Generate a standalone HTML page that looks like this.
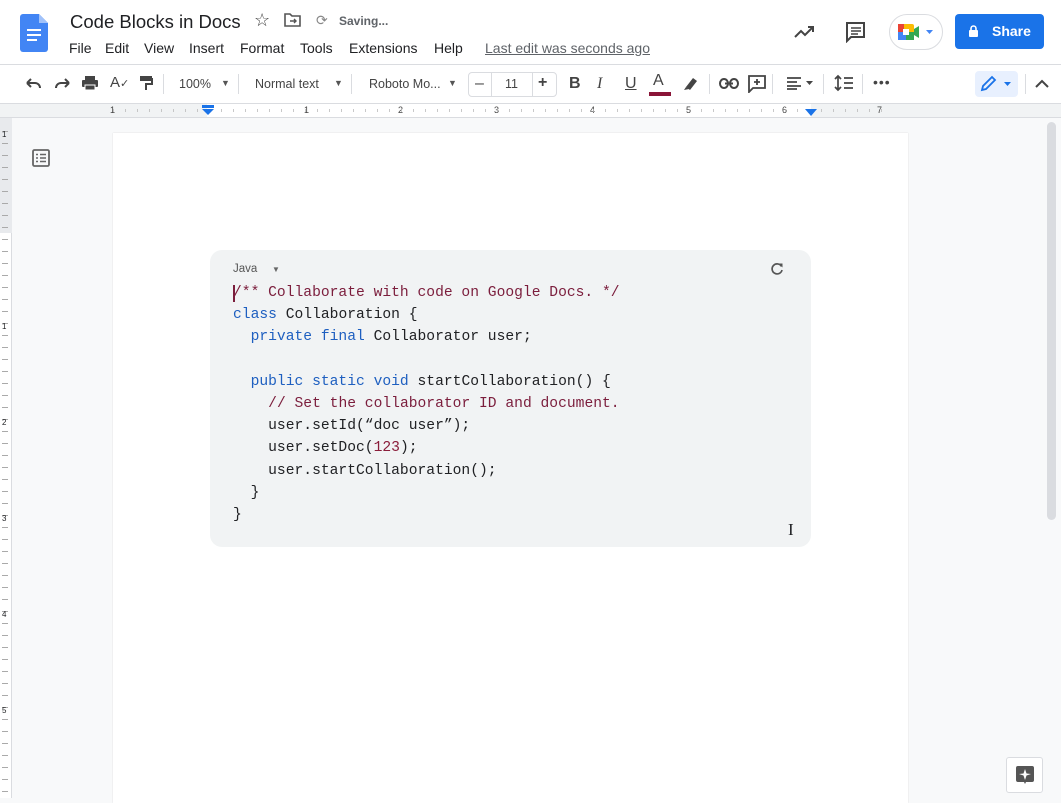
<!DOCTYPE html><html><head><style>
*{margin:0;padding:0;box-sizing:border-box}
body{width:1061px;height:798px;overflow:hidden;background:#f8f9fa;font-family:"Liberation Sans",sans-serif;position:relative;color:#202124}
.a{position:absolute}
.menu span{position:absolute;top:0}
.tb{font-size:12.5px;color:#444}
.sep{position:absolute;top:74px;width:1px;height:20px;background:#dadce0}
pre{font-family:"Liberation Mono",monospace;font-size:14.65px;line-height:22.2px;color:#202124}
.k{color:#1e5fc0}.c{color:#7b1d3c}.n{color:#8a1d3a}
</style></head><body>
<div class="a" style="left:0;top:0;width:1061px;height:65px;background:#fff;border-bottom:1px solid #dadce0"></div>
<svg class="a" style="left:20px;top:14px" width="28" height="38"><path d="M0 3a3 3 0 0 1 3-3h16l9 9v26a3 3 0 0 1-3 3H3a3 3 0 0 1-3-3z" fill="#4285f4"/><path d="M19 0v9h9z" fill="#a1c2fa"/><rect x="7" y="15" width="14" height="2" fill="#fff"/><rect x="7" y="20" width="14" height="2" fill="#fff"/><rect x="7" y="25" width="10" height="2" fill="#fff"/></svg>
<div class="a" style="left:70px;top:11px;font-size:18.5px">Code Blocks in Docs</div>
<div class="a" style="left:254px;top:10px;font-size:18px;color:#444">☆</div>
<svg class="a" style="left:284px;top:13px" width="17" height="14"><path d="M1 1h5l2 2h8v10H1z" fill="none" stroke="#555" stroke-width="1.6"/><path d="M6 8h6M10 6l2 2-2 2" stroke="#555" stroke-width="1.4" fill="none"/></svg>
<div class="a" style="left:316px;top:12px;font-size:14px;color:#888">⟳</div>
<div class="a" style="left:339px;top:14px;font-size:12px;color:#5f6368;font-weight:bold">Saving...</div>
<div class="a menu" style="left:0;top:40px;font-size:14px"><span style="left:69px">File</span><span style="left:105px">Edit</span><span style="left:144px">View</span><span style="left:189px">Insert</span><span style="left:240px">Format</span><span style="left:300px">Tools</span><span style="left:349px">Extensions</span><span style="left:434px">Help</span></div>
<div class="a" style="left:485px;top:40px;font-size:14px;color:#5f6368;text-decoration:underline">Last edit was seconds ago</div>
<svg class="a" style="left:794px;top:24px" width="22" height="16"><path d="M1 13l6-6 4 4 8-8M14 3h5v5" fill="none" stroke="#444" stroke-width="2"/></svg>
<svg class="a" style="left:845px;top:21px" width="22" height="22"><path d="M2 2h17v14H6l-4 4z" fill="none" stroke="#444" stroke-width="2"/><path d="M6 7h10M6 10h10M6 13h7" stroke="#444" stroke-width="1.6"/></svg>
<div class="a" style="left:889px;top:14px;width:54px;height:36px;border:1px solid #dadce0;border-radius:18px;background:#fff"></div>
<svg class="a" style="left:897px;top:23px" width="40" height="18"><rect x="1" y="1" width="16" height="16" rx="2" fill="#fbbc04"/><rect x="1" y="9" width="8" height="8" fill="#4285f4"/><rect x="9" y="9" width="8" height="8" fill="#34a853"/><rect x="1" y="1" width="6" height="8" fill="#ea4335"/><rect x="6" y="6" width="6" height="6" fill="#fff"/><path d="M17 6l5-3v12l-5-3z" fill="#34a853"/><path d="M29 7h7l-3.5 4z" fill="#4285f4"/></svg>
<div class="a" style="left:955px;top:14px;width:89px;height:35px;background:#1a73e8;border-radius:4px;color:#fff;font-size:14px;font-weight:bold;line-height:35px;padding-left:37px">Share</div>
<svg class="a" style="left:968px;top:25px" width="11" height="13"><rect x="1" y="5" width="9" height="7" rx="1" fill="#fff"/><path d="M3 5V3.5a2.5 2.5 0 0 1 5 0V5" stroke="#fff" stroke-width="1.6" fill="none"/></svg>
<!-- toolbar -->
<div class="a" style="left:0;top:65px;width:1061px;height:38px;background:#fff"></div>
<svg class="a" style="left:24px;top:77px" width="48" height="14"><path d="M3 6h8a5 5 0 0 1 5 5M3 6l4-4M3 6l4 4" stroke="#444" stroke-width="2" fill="none"/><path d="M45 6h-8a5 5 0 0 0-5 5M45 6l-4-4M45 6l-4 4" stroke="#444" stroke-width="2" fill="none"/></svg>
<svg class="a" style="left:81px;top:75px" width="18" height="16"><rect x="1" y="5" width="16" height="7" rx="1" fill="#444"/><rect x="4" y="1" width="10" height="4" fill="#444"/><rect x="4" y="10" width="10" height="5" fill="#444" stroke="#fff"/></svg>
<div class="a" style="left:110px;top:74px;font-size:15px;color:#444">A<span style="font-size:11px">✓</span></div>
<svg class="a" style="left:139px;top:75px" width="14" height="16"><rect x="1" y="1" width="12" height="5" fill="#444"/><path d="M12 4h1v5H7v6" stroke="#444" stroke-width="2" fill="none"/></svg>
<div class="sep" style="left:163px"></div>
<div class="a tb" style="left:179px;top:77px">100%</div><div class="a" style="left:221px;top:78px;font-size:9px;color:#555">▼</div>
<div class="sep" style="left:238px"></div>
<div class="a tb" style="left:255px;top:77px">Normal text</div><div class="a" style="left:334px;top:78px;font-size:9px;color:#555">▼</div>
<div class="sep" style="left:351px"></div>
<div class="a tb" style="left:369px;top:77px">Roboto Mo...</div><div class="a" style="left:448px;top:78px;font-size:9px;color:#555">▼</div>
<div class="a" style="left:468px;top:72px;width:89px;height:25px;border:1px solid #dadce0;border-radius:4px"></div>
<div class="a" style="left:491px;top:72px;width:42px;height:25px;border-left:1px solid #dadce0;border-right:1px solid #dadce0"></div>
<div class="a tb" style="left:475px;top:75px;font-size:16px">–</div>
<div class="a tb" style="left:505px;top:77px">11</div>
<div class="a tb" style="left:538px;top:74px;font-size:16px;font-weight:bold">+</div>
<div class="a" style="left:569px;top:75px;font-size:16px;font-weight:bold;color:#444">B</div>
<div class="a" style="left:597px;top:75px;font-size:16px;font-style:italic;color:#444;font-family:'Liberation Serif'">I</div>
<div class="a" style="left:625px;top:75px;font-size:16px;text-decoration:underline;color:#444">U</div>
<div class="a" style="left:653px;top:72px;font-size:16px;color:#444">A</div>
<div class="a" style="left:649px;top:92px;width:22px;height:4px;background:#8a1538"></div>
<svg class="a" style="left:683px;top:75px" width="16" height="16"><path d="M3 12l7-9 4 3-7 9z" fill="#444"/><path d="M1 15l2-3 3 2z" fill="#444"/></svg>
<div class="sep" style="left:709px"></div>
<svg class="a" style="left:719px;top:78px" width="20" height="12"><rect x="1" y="1" width="8" height="9" rx="4.5" fill="none" stroke="#444" stroke-width="2"/><rect x="11" y="1" width="8" height="9" rx="4.5" fill="none" stroke="#444" stroke-width="2"/><path d="M6 5.5h8" stroke="#444" stroke-width="2"/></svg>
<svg class="a" style="left:748px;top:75px" width="18" height="18"><path d="M1 1h16v12H5l-4 4z" fill="none" stroke="#444" stroke-width="1.8"/><path d="M9 4v6M6 7h6" stroke="#444" stroke-width="1.8"/></svg>
<div class="sep" style="left:772px"></div>
<svg class="a" style="left:786px;top:76px" width="30" height="14"><path d="M1 2h14M1 6h10M1 10h14M1 13h10" stroke="#444" stroke-width="1.7"/><path d="M20 5h7l-3.5 4z" fill="#444"/></svg>
<div class="sep" style="left:823px"></div>
<svg class="a" style="left:834px;top:74px" width="20" height="18"><path d="M4 2v14M1 5l3-3 3 3M1 13l3 3 3-3" stroke="#444" stroke-width="1.7" fill="none"/><path d="M10 4h9M10 9h9M10 14h9" stroke="#444" stroke-width="1.8"/></svg>
<div class="sep" style="left:862px"></div>
<div class="a" style="left:873px;top:74px;font-size:14px;color:#444;letter-spacing:1px">•••</div>
<div class="a" style="left:975px;top:71px;width:43px;height:26px;background:#e8f0fe;border-radius:4px"></div>
<svg class="a" style="left:980px;top:75px" width="34" height="18"><path d="M2 15l1-4 9-9 3 3-9 9z" fill="none" stroke="#1a73e8" stroke-width="1.8"/><path d="M24 7h7l-3.5 4z" fill="#1a73e8"/></svg>
<div class="sep" style="left:1025px"></div>
<svg class="a" style="left:1035px;top:79px" width="14" height="9"><path d="M1 8l6-6 6 6" stroke="#444" stroke-width="2" fill="none"/></svg>
<!-- ruler -->
<div class="a" style="left:0;top:103px;width:1061px;height:15px;background:#f1f3f4;border-top:1px solid #dadce0;border-bottom:1px solid #dadce0"></div>
<div class="a" style="left:207px;top:104px;width:604px;height:13px;background:#fff"></div>
<div class="a" style="left:0;top:103px;width:1061px;height:15px;font-size:9px;color:#444;line-height:15px">
<span class="a" style="left:110px">1</span><span class="a" style="left:304px">1</span><span class="a" style="left:398px">2</span><span class="a" style="left:494px">3</span><span class="a" style="left:590px">4</span><span class="a" style="left:686px">5</span><span class="a" style="left:782px">6</span><span class="a" style="left:877px">7</span></div>
<div class="a" style="left:113px;top:109px;width:780px;height:3px;background:repeating-linear-gradient(90deg,#bbb 0 1px,transparent 1px 12px);opacity:.8"></div>
<svg class="a" style="left:201px;top:105px" width="14" height="12"><rect x="1" y="0" width="12" height="3" fill="#1a73e8"/><path d="M1 4h12l-6 6z" fill="#1a73e8"/></svg>
<svg class="a" style="left:805px;top:109px" width="12" height="8"><path d="M0 0h12l-6 7z" fill="#1a73e8"/></svg>
<!-- left ruler -->
<div class="a" style="left:0;top:118px;width:12px;height:680px;background:#fff;border-right:1px solid #dadce0"></div>
<div class="a" style="left:0;top:118px;width:12px;height:115px;background:#e8eaed"></div>
<div class="a" style="left:2px;top:120px;width:6px;height:678px;background:repeating-linear-gradient(180deg,transparent 0 11px,#aaa 11px 12px)"></div>
<div class="a" style="left:2px;top:130px;font-size:8px">1</div>
<div class="a" style="left:2px;top:322px;font-size:8px">1</div>
<div class="a" style="left:2px;top:418px;font-size:8px">2</div>
<div class="a" style="left:2px;top:514px;font-size:8px">3</div>
<div class="a" style="left:2px;top:610px;font-size:8px">4</div>
<div class="a" style="left:2px;top:706px;font-size:8px">5</div>
<svg class="a" style="left:32px;top:149px" width="18" height="18"><rect x="1" y="1" width="16" height="16" rx="1.5" fill="none" stroke="#666" stroke-width="1.8"/><path d="M4 5.5h2M8 5.5h6M4 9h2M8 9h6M4 12.5h2M8 12.5h6" stroke="#666" stroke-width="1.6"/></svg>
<!-- page -->
<div class="a" style="left:113px;top:133px;width:795px;height:670px;background:#fff;box-shadow:0 0 1px #ccc"></div>
<div class="a" style="left:210px;top:250px;width:601px;height:297px;background:#f1f3f4;border-radius:12px"></div>
<div class="a" style="left:233px;top:263px;font-size:11.5px;color:#555">Java</div>
<div class="a" style="left:272px;top:265px;font-size:8px;color:#666">▼</div>
<svg class="a" style="left:770px;top:262px" width="14" height="14"><path d="M11.5 4.5A5 5 0 1 0 12 8" stroke="#555" stroke-width="1.7" fill="none"/><path d="M8.5 1.5h4v4z" fill="#555"/></svg>
<div class="a" style="left:233px;top:285px;width:2px;height:17px;background:#7b1d3c"></div>
<pre class="a" style="left:233px;top:282px"><span class="c">/** Collaborate with code on Google Docs. */</span>
<span class="k">class</span> Collaboration {
  <span class="k">private final</span> Collaborator user;

  <span class="k">public static void</span> startCollaboration() {
    <span class="c">// Set the collaborator ID and document.</span>
    user.setId(“doc user”);
    user.setDoc(<span class="n">123</span>);
    user.startCollaboration();
  }
}</pre>
<div class="a" style="left:788px;top:520px;font-size:17px;font-family:'Liberation Serif'">I</div>
<div class="a" style="left:1047px;top:122px;width:9px;height:398px;background:#dadce0;border-radius:5px"></div>
<div class="a" style="left:1006px;top:757px;width:37px;height:36px;background:#fff;border:1px solid #dadce0;border-radius:3px"></div>
<svg class="a" style="left:1016px;top:766px" width="18" height="19"><rect x="0" y="0" width="18" height="16" rx="2" fill="#555"/><path d="M8 16l1 2 1-2z" fill="#555"/><path d="M9 3l1.5 4.5L15 8l-4.5 1.5L9 14l-1.5-4.5L3 8l4.5-.5z" fill="#fff"/></svg>
</body></html>
